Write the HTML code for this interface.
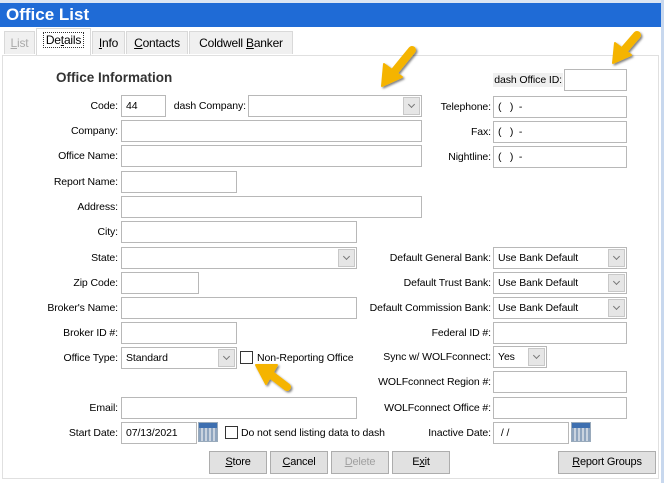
<!DOCTYPE html>
<html><head><meta charset="utf-8"><style>
*{margin:0;padding:0;box-sizing:border-box}
body{width:664px;height:483px;background:#f0f0f0;font-family:"Liberation Sans",Arial,sans-serif;font-size:11px;color:#000;position:relative;overflow:hidden}
.a{position:absolute}
.in{position:absolute;background:#fff;border:1px solid #b8b8b8;height:22px;padding:3px 4px;font-size:10.5px;line-height:14px;letter-spacing:-0.1px}
.sel .dd{position:absolute;right:1px;top:1px;width:17px;height:18px;background:#e6e6e6;border:1px solid #c8c8c8}
.sel .dd:after{content:"";position:absolute;left:5px;top:4px;width:4px;height:4px;border-right:1px solid #777;border-bottom:1px solid #777;transform:rotate(45deg)}
.lb{position:absolute;text-align:right;font-size:10.5px;letter-spacing:-0.1px;line-height:14px;white-space:nowrap}
.cb{position:absolute;width:13px;height:13px;background:#fff;border:1px solid #333}
.btn{position:absolute;top:451px;height:23px;background:#e1e1e1;border:1px solid #adadad;text-align:center;line-height:21px;font-size:11px;letter-spacing:-0.2px}
.cal{position:absolute;width:20px;height:20px;border:1px solid #9ab;background:repeating-linear-gradient(90deg,#8fa5bf 0 2px,#c9d3df 2px 4px);}
.cal:before{content:"";position:absolute;left:0;top:0;right:0;height:5px;background:#3d6fb0}
.tab{position:absolute;top:31px;height:23px;background:#f0f0f0;border:1px solid #d9d9d9;border-bottom:none;font-size:12px;line-height:22px;text-align:center;letter-spacing:-0.2px}
</style></head><body>
<div class="a" style="left:0;top:0;width:664px;height:3px;background:#dce6f3"></div>
<div class="a" style="left:0;top:3px;width:661px;height:24px;background:#1f6bd6;color:#fff;font-weight:bold;font-size:17px;line-height:24px;padding-left:6px">Office List</div>
<div class="a" style="left:661px;top:0;width:3px;height:483px;background:#c8d8ee"></div>
<div class="a" style="left:0;top:27px;width:661px;height:456px;background:#fff"></div>
<div class="tab" style="left:4px;width:31px;color:#aaa;background:#f0f0f0"><u>L</u>ist</div>
<div class="tab" style="left:36px;top:28px;height:27px;width:55px;background:#fff"><span style="border:1px dotted #333;padding:0 2px">De<u>t</u>ails</span></div>
<div class="tab" style="left:92px;width:33px"><u>I</u>nfo</div>
<div class="tab" style="left:126px;width:62px"><u>C</u>ontacts</div>
<div class="tab" style="left:189px;width:104px">Coldwell <u>B</u>anker</div>
<div class="a" style="left:2px;top:55px;width:657px;height:424px;border:1px solid #e0e0e0;background:#fff"></div>
<div class="a" style="left:56px;top:70px;font-weight:bold;font-size:13.5px;color:#333">Office Information</div>

<div class="lb" style="right:546px;top:99px">Code:</div>
<div class="in" style="left:121px;top:95px;width:45px">44</div>
<div class="lb" style="right:418px;top:99px">dash Company:</div>
<div class="in sel" style="left:248px;top:95px;width:174px"><div class="dd"></div></div>
<div class="lb" style="right:546px;top:124px">Company:</div>
<div class="in" style="left:121px;top:120px;width:301px"></div>
<div class="lb" style="right:546px;top:149px">Office Name:</div>
<div class="in" style="left:121px;top:145px;width:301px"></div>
<div class="lb" style="right:546px;top:175px">Report Name:</div>
<div class="in" style="left:121px;top:171px;width:116px"></div>
<div class="lb" style="right:546px;top:200px">Address:</div>
<div class="in" style="left:121px;top:196px;width:301px"></div>
<div class="lb" style="right:546px;top:225px">City:</div>
<div class="in" style="left:121px;top:221px;width:236px"></div>
<div class="lb" style="right:546px;top:251px">State:</div>
<div class="in sel" style="left:121px;top:247px;width:236px"><div class="dd"></div></div>
<div class="lb" style="right:546px;top:276px">Zip Code:</div>
<div class="in" style="left:121px;top:272px;width:78px"></div>
<div class="lb" style="right:546px;top:301px">Broker's Name:</div>
<div class="in" style="left:121px;top:297px;width:236px"></div>
<div class="lb" style="right:546px;top:326px">Broker ID #:</div>
<div class="in" style="left:121px;top:322px;width:116px"></div>
<div class="lb" style="right:546px;top:351px">Office Type:</div>
<div class="in sel" style="left:121px;top:347px;width:116px">Standard<div class="dd"></div></div>
<div class="cb" style="left:240px;top:351px"></div>
<div class="lb" style="left:257px;top:351px">Non-Reporting Office</div>
<div class="lb" style="right:546px;top:401px">Email:</div>
<div class="in" style="left:121px;top:397px;width:236px"></div>
<div class="lb" style="right:546px;top:426px">Start Date:</div>
<div class="in" style="left:121px;top:422px;width:76px">07/13/2021</div>
<div class="cal" style="left:198px;top:422px"></div>
<div class="cb" style="left:225px;top:426px"></div>
<div class="lb" style="left:241px;top:426px">Do not send listing data to dash</div>

<div class="lb" style="right:101px;top:73px;background:#f0f0f0;padding:0 1px">dash Office ID:</div>
<div class="in" style="left:564px;top:69px;width:63px"></div>
<div class="lb" style="right:173px;top:100px">Telephone:</div>
<div class="in" style="left:493px;top:96px;width:134px">(&nbsp;&nbsp;&nbsp;)&nbsp;&nbsp;-</div>
<div class="lb" style="right:173px;top:125px">Fax:</div>
<div class="in" style="left:493px;top:121px;width:134px">(&nbsp;&nbsp;&nbsp;)&nbsp;&nbsp;-</div>
<div class="lb" style="right:173px;top:150px">Nightline:</div>
<div class="in" style="left:493px;top:146px;width:134px">(&nbsp;&nbsp;&nbsp;)&nbsp;&nbsp;-</div>
<div class="lb" style="right:173px;top:251px">Default General Bank:</div>
<div class="in sel" style="left:493px;top:247px;width:134px">Use Bank Default<div class="dd"></div></div>
<div class="lb" style="right:173px;top:276px">Default Trust Bank:</div>
<div class="in sel" style="left:493px;top:272px;width:134px">Use Bank Default<div class="dd"></div></div>
<div class="lb" style="right:173px;top:301px">Default Commission Bank:</div>
<div class="in sel" style="left:493px;top:297px;width:134px">Use Bank Default<div class="dd"></div></div>
<div class="lb" style="right:173px;top:326px">Federal ID #:</div>
<div class="in" style="left:493px;top:322px;width:134px"></div>
<div class="lb" style="right:173px;top:350px">Sync w/ WOLFconnect:</div>
<div class="in sel" style="left:493px;top:346px;width:54px">Yes<div class="dd"></div></div>
<div class="lb" style="right:173px;top:375px">WOLFconnect Region #:</div>
<div class="in" style="left:493px;top:371px;width:134px"></div>
<div class="lb" style="right:173px;top:401px">WOLFconnect Office #:</div>
<div class="in" style="left:493px;top:397px;width:134px"></div>
<div class="lb" style="right:173px;top:426px">Inactive Date:</div>
<div class="in" style="left:493px;top:422px;width:76px">&nbsp;/ /</div>
<div class="cal" style="left:571px;top:422px"></div>

<div class="btn" style="left:209px;width:58px"><u>S</u>tore</div>
<div class="btn" style="left:270px;width:58px"><u>C</u>ancel</div>
<div class="btn" style="left:331px;width:58px;color:#a0a0a0"><u>D</u>elete</div>
<div class="btn" style="left:392px;width:58px">E<u>x</u>it</div>
<div class="btn" style="left:558px;width:98px"><u>R</u>eport Groups</div>

<svg class="a" style="left:0;top:0" width="664" height="483">
<defs><filter id="s"><feDropShadow dx="1.5" dy="1.5" stdDeviation="1" flood-color="#000" flood-opacity=".5"/></filter></defs>
<g fill="#f5b400" stroke="#f5b400" stroke-linecap="round" stroke-linejoin="round" filter="url(#s)">
<line x1="412" y1="50" x2="394" y2="72" stroke-width="8"/>
<polygon points="382,86 384,64 402,77" stroke-width="2"/>
<line x1="637" y1="35" x2="624" y2="50" stroke-width="8"/>
<polygon points="613,63 615,43 631,55" stroke-width="2"/>
<line x1="287" y1="387" x2="270" y2="374" stroke-width="8"/>
<polygon points="256,365 277,365 266,384" stroke-width="2"/>
</g></svg>
</body></html>
